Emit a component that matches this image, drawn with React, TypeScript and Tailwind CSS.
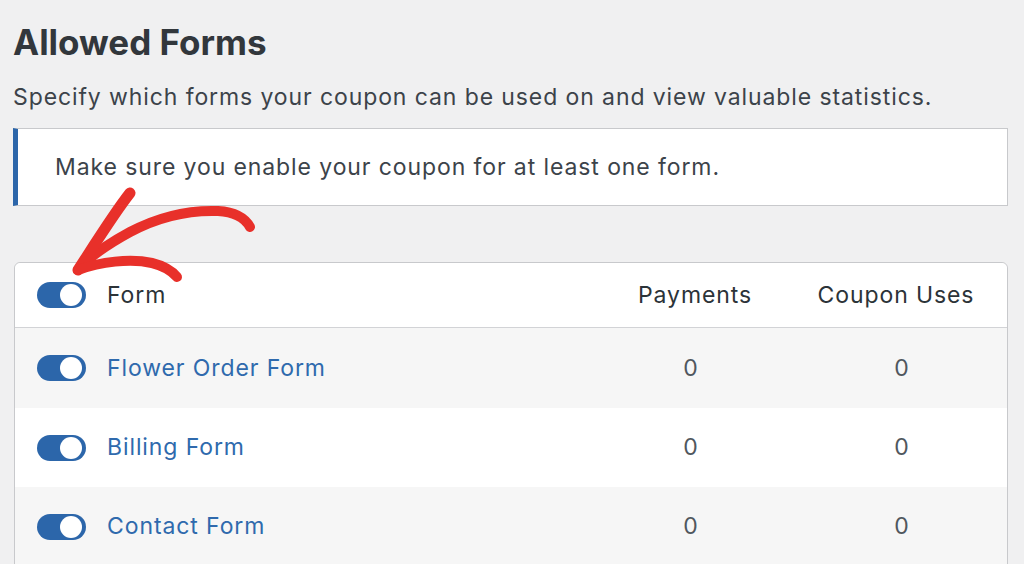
import React from "react";

const Toggle = () => (
  <div className="relative h-[26px] w-[49px] shrink-0 rounded-full bg-[#2c66aa]">
    <div className="absolute right-[4px] top-[2px] h-[22px] w-[22px] rounded-full bg-white" />
  </div>
);

const rows = [
  { name: "Flower Order Form", bg: "bg-[#f6f6f6]", h: "h-[80px]" },
  { name: "Billing Form", bg: "bg-white", h: "h-[79px]" },
  { name: "Contact Form", bg: "bg-[#f6f6f6]", h: "h-[79px]" },
];

export default function App() {
  return (
    <div
      className="relative h-[564px] w-[1024px] overflow-hidden bg-[#f0f0f1] pl-[13px] pr-[16px]"
      style={{ fontFamily: "Inter, 'Noto Sans', sans-serif" }}
    >
      <h1 className="pt-[22px] text-[35px] font-bold leading-[40px] text-[#32373c]">
        Allowed Forms
      </h1>
      <p className="mt-[20px] text-[23px] leading-[30px] tracking-[0.9px] text-[#3c434a]">
        Specify which forms your coupon can be used on and view valuable statistics.
      </p>
      <div className="mt-[16px] flex h-[78px] w-[995px] items-center border border-l-[5px] border-[#c8c9cc] border-l-[#2c66aa] bg-white pl-[37px] text-[23px] tracking-[0.9px] text-[#3c434a]">
        Make sure you enable your coupon for at least one form.
      </div>

      <div className="ml-[1px] mt-[56px] w-[994px] rounded-t-[6px] border border-[#c8c9cc] bg-white">
        <div className="grid h-[65px] grid-cols-[1fr_180px_222px] items-center rounded-t-[6px] border-b border-[#d2d3d6] bg-white text-[23px] tracking-[0.9px] text-[#2c3338]">
          <div className="flex items-center gap-[21px] pl-[22px]">
            <Toggle />
            <span>Form</span>
          </div>
          <div className="text-center">Payments</div>
          <div className="text-center">Coupon Uses</div>
        </div>
        {rows.map((r) => (
          <div
            key={r.name}
            className={`grid grid-cols-[1fr_180px_222px] items-center text-[23px] tracking-[0.9px] ${r.h} ${r.bg}`}
          >
            <div className="flex items-center gap-[21px] pl-[22px]">
              <Toggle />
              <span className="text-[#2f6aad]">{r.name}</span>
            </div>
            <div className="pr-[8px] text-center text-[#50575e]">0</div>
            <div className="pl-[12px] text-center text-[#50575e]">0</div>
          </div>
        ))}
      </div>

      <svg
        className="pointer-events-none absolute left-0 top-0"
        width="1024"
        height="564"
        viewBox="0 0 1024 564"
      >
        <g fill="none" stroke="#e8302a" strokeLinecap="round" strokeLinejoin="round">
          <path
            d="M250 227 C 245 218, 236 212, 218 211 C 190 210, 160 216, 130 232 C 108 244, 90 256, 78 270"
            strokeWidth="10"
          />
          <path d="M130 193 C 115 212, 100 236, 78 270" strokeWidth="11" />
          <path d="M78 270 C 100 262, 130 258, 152 263 C 164 266, 172 271, 177 277" strokeWidth="10" />
        </g>
      </svg>
    </div>
  );
}
